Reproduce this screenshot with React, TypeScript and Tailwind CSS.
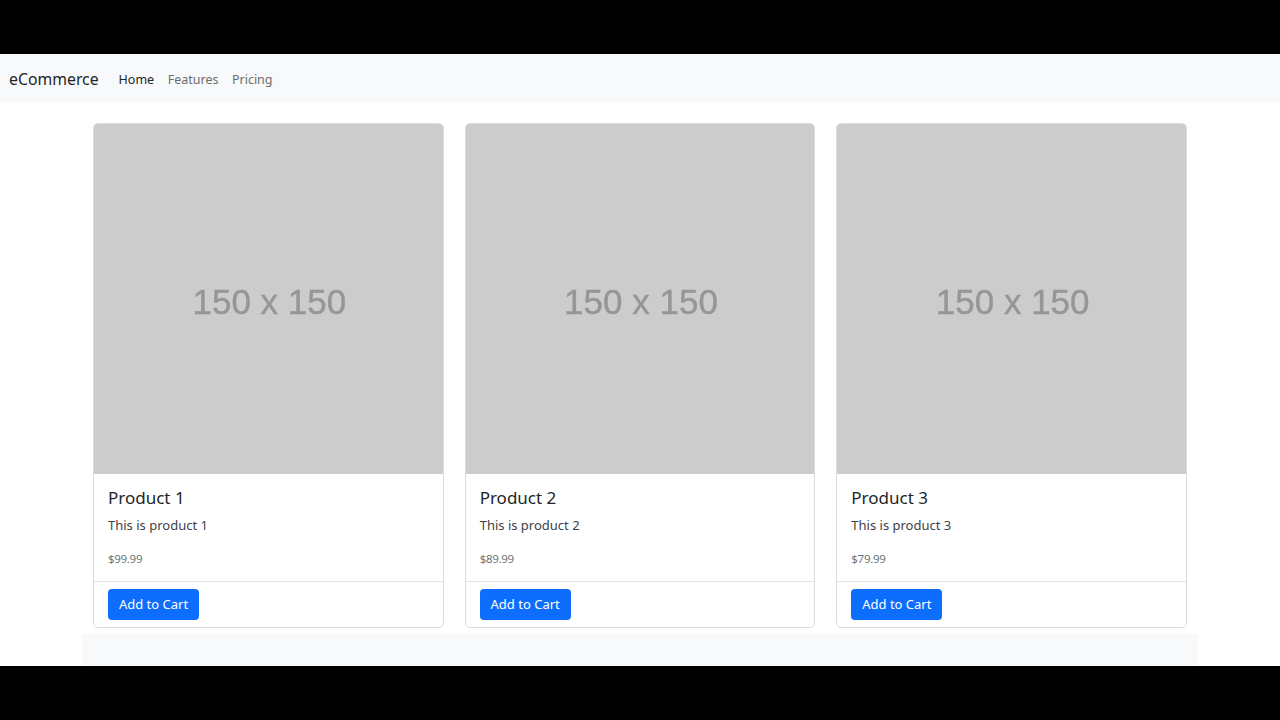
const products = [
  { name: "Product 1", desc: "This is product 1", price: "$99.99" },
  { name: "Product 2", desc: "This is product 2", price: "$89.99" },
  { name: "Product 3", desc: "This is product 3", price: "$79.99" },
];

function ProductCard({ name, desc, price }: { name: string; desc: string; price: string }) {
  return (
    <div className="flex flex-col rounded-[5px] border border-[#dcdcdc] bg-white overflow-hidden">
      <div className="h-[350px] bg-[#cccccc] flex items-center justify-center">
        <span className="font-['Liberation_Sans',Arial,sans-serif] text-[35px] text-[#969696] [-webkit-text-stroke:0.4px_#969696] pt-[6px] pl-[2px] blur-[0.3px]">
          150 x 150
        </span>
      </div>
      <div className="px-[14px] pt-[14px] pb-[15px] border-b border-[#e2e2e2]">
        <h5 className="h-[20px] leading-[20px] text-[17px] text-[#212529] mb-[8px]">{name}</h5>
        <p className="h-[18px] leading-[18px] text-[13px] text-[#3d4247] mb-[16px]">{desc}</p>
        <p className="h-[16px] leading-[16px] text-[11.5px] text-[#6c757d] tracking-[-0.3px] pt-[1px]">{price}</p>
      </div>
      <div className="px-[14px] pt-[7px] pb-[7px]">
        <button className="h-[31px] w-[91px] rounded-[4px] bg-[#0d6efd] text-white text-[13px]">
          Add to Cart
        </button>
      </div>
    </div>
  );
}

export default function App() {
  return (
    <div className="h-[720px] bg-black flex flex-col font-['Noto_Sans',sans-serif]">
      <div className="h-[54px]" />
      <div className="h-[612px] bg-white flex flex-col">
        <nav className="h-[48px] bg-[#f8f9fa] flex items-center px-[9px] pt-[4px]">
          <a className="text-[15.8px] text-[#212529] mr-[20px]">eCommerce</a>
          <div className="flex gap-[13.5px] text-[12.5px]">
            <a className="text-[#212529]">Home</a>
            <a className="text-[#6c6c6c]">Features</a>
            <a className="text-[#6c6c6c]">Pricing</a>
          </div>
        </nav>
        <main className="pt-[21px]">
          <div className="w-[1116px] mx-auto px-[11px] grid grid-cols-3 gap-[21px]">
            {products.map((p) => (
              <ProductCard key={p.name} {...p} />
            ))}
          </div>
          <div className="w-[1116px] mx-auto mt-[6px] h-[32px] bg-[#f8f9fa]" />
        </main>
      </div>
    </div>
  );
}
